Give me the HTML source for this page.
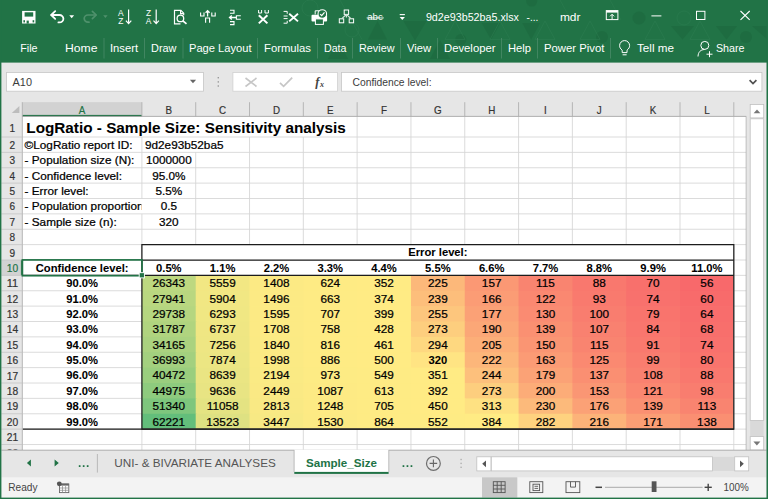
<!DOCTYPE html>
<html><head><meta charset="utf-8"><title>Excel</title>
<style>html,body{margin:0;padding:0;background:#e6e6e6;overflow:hidden}svg{display:block}</style></head>
<body><svg width="768" height="499" viewBox="0 0 768 499">
<rect x="0.00" y="0.00" width="768.00" height="499.00" fill="#e6e6e6" />
<rect x="0.00" y="0.00" width="768.00" height="62.60" fill="#217346" />
<g fill="#1c673d" opacity="0.5"><path d="M377.500 21l-9.500 18.500h19z"/><path d="M403.500 21h23l-11.500 19.500z"/><path d="M481.700 23h18.700l-9.400 16.600z"/><path d="M522.300 23h17.700l-8.800 16.600z"/><circle cx="460.800" cy="39.600" r="5.500"/><circle cx="531.700" cy="1" r="5.500"/><circle cx="639" cy="18" r="6.500"/><circle cx="602" cy="37" r="6"/><circle cx="746" cy="37" r="6"/><path d="M671 26h23l-11.500 13.500z"/><path d="M716 26h21l-10.500 13.500z"/><path d="M752 26h15v13z"/><path d="M338 40l10 19h-20z"/><path d="M440 40l10 19h-20z"/></g>
<g fill="none" stroke="#2d7e52" stroke-width="0.800" opacity="0.700"><path d="M340 0l22 39.500M455 21l10 18.500h-20zM500 21l10 18.500h-20zM545 21l10 18.500h-20zM590 21l10 18.500h-20zM560 0l11 20M610 0l11 20M655 21l10 18.500h-20zM700 21l10 18.500h-20z"/><circle cx="310" cy="8" r="8"/><circle cx="352" cy="30" r="7"/><circle cx="684" cy="18" r="7"/></g>
<g font-family="Liberation Sans, sans-serif">
<text x="425.90" y="20.70" font-size="11.4" fill="#ffffff" text-anchor="start" font-weight="normal" textLength="93.00" lengthAdjust="spacingAndGlyphs" >9d2e93b52ba5.xlsx</text>
<text x="526.60" y="20.70" font-size="11.4" fill="#ffffff" text-anchor="start" font-weight="normal" textLength="11.80" lengthAdjust="spacingAndGlyphs" >-...</text>
<text x="559.90" y="20.70" font-size="11.4" fill="#ffffff" text-anchor="start" font-weight="normal" textLength="20.60" lengthAdjust="spacingAndGlyphs" >mdr</text>
<!--TABS-->
<text x="20.30" y="52.00" font-size="11.6" fill="#ffffff" text-anchor="start" font-weight="normal" textLength="17.30" lengthAdjust="spacingAndGlyphs" >File</text>
<text x="65.00" y="52.00" font-size="11.6" fill="#ffffff" text-anchor="start" font-weight="normal" textLength="32.50" lengthAdjust="spacingAndGlyphs" >Home</text>
<text x="110.00" y="52.00" font-size="11.6" fill="#ffffff" text-anchor="start" font-weight="normal" textLength="28.00" lengthAdjust="spacingAndGlyphs" >Insert</text>
<text x="151.00" y="52.00" font-size="11.6" fill="#ffffff" text-anchor="start" font-weight="normal" textLength="25.50" lengthAdjust="spacingAndGlyphs" >Draw</text>
<text x="189.00" y="52.00" font-size="11.6" fill="#ffffff" text-anchor="start" font-weight="normal" textLength="62.50" lengthAdjust="spacingAndGlyphs" >Page Layout</text>
<text x="264.00" y="52.00" font-size="11.6" fill="#ffffff" text-anchor="start" font-weight="normal" textLength="47.00" lengthAdjust="spacingAndGlyphs" >Formulas</text>
<text x="324.00" y="52.00" font-size="11.6" fill="#ffffff" text-anchor="start" font-weight="normal" textLength="22.50" lengthAdjust="spacingAndGlyphs" >Data</text>
<text x="359.00" y="52.00" font-size="11.6" fill="#ffffff" text-anchor="start" font-weight="normal" textLength="35.50" lengthAdjust="spacingAndGlyphs" >Review</text>
<text x="407.00" y="52.00" font-size="11.6" fill="#ffffff" text-anchor="start" font-weight="normal" textLength="24.00" lengthAdjust="spacingAndGlyphs" >View</text>
<text x="444.00" y="52.00" font-size="11.6" fill="#ffffff" text-anchor="start" font-weight="normal" textLength="51.50" lengthAdjust="spacingAndGlyphs" >Developer</text>
<text x="508.00" y="52.00" font-size="11.6" fill="#ffffff" text-anchor="start" font-weight="normal" textLength="23.00" lengthAdjust="spacingAndGlyphs" >Help</text>
<text x="544.00" y="52.00" font-size="11.6" fill="#ffffff" text-anchor="start" font-weight="normal" textLength="60.50" lengthAdjust="spacingAndGlyphs" >Power Pivot</text>
<text x="637.00" y="52.00" font-size="11.6" fill="#ffffff" text-anchor="start" font-weight="normal" textLength="37.00" lengthAdjust="spacingAndGlyphs" >Tell me</text>
<text x="716.00" y="52.00" font-size="11.6" fill="#ffffff" text-anchor="start" font-weight="normal" textLength="28.50" lengthAdjust="spacingAndGlyphs" >Share</text>
<line x1="104.00" y1="38.00" x2="104.00" y2="58.50" stroke="#4a8c68" stroke-width="0.8" />
<line x1="144.50" y1="38.00" x2="144.50" y2="58.50" stroke="#4a8c68" stroke-width="0.8" />
<line x1="183.00" y1="38.00" x2="183.00" y2="58.50" stroke="#4a8c68" stroke-width="0.8" />
<line x1="257.50" y1="38.00" x2="257.50" y2="58.50" stroke="#4a8c68" stroke-width="0.8" />
<line x1="317.50" y1="38.00" x2="317.50" y2="58.50" stroke="#4a8c68" stroke-width="0.8" />
<line x1="352.50" y1="38.00" x2="352.50" y2="58.50" stroke="#4a8c68" stroke-width="0.8" />
<line x1="400.50" y1="38.00" x2="400.50" y2="58.50" stroke="#4a8c68" stroke-width="0.8" />
<line x1="437.50" y1="38.00" x2="437.50" y2="58.50" stroke="#4a8c68" stroke-width="0.8" />
<line x1="501.50" y1="38.00" x2="501.50" y2="58.50" stroke="#4a8c68" stroke-width="0.8" />
<line x1="537.50" y1="38.00" x2="537.50" y2="58.50" stroke="#4a8c68" stroke-width="0.8" />
<line x1="610.50" y1="38.00" x2="610.50" y2="58.50" stroke="#4a8c68" stroke-width="0.8" />
</g>
<!--QAT-->
<g id="qat">
<!-- save -->
<rect x="22.1" y="10.9" width="13.4" height="12.6" fill="#fff"/>
<rect x="24.6" y="12.3" width="8.6" height="4.3" fill="#217346"/>
<rect x="23.4" y="20.2" width="1.6" height="2.2" fill="#217346"/><rect x="32.6" y="20.2" width="1.6" height="2.2" fill="#217346"/>
<rect x="26.6" y="20.6" width="2.2" height="3" fill="#217346"/>
<!-- undo -->
<g fill="none" stroke="#fff" stroke-width="1.8" stroke-linecap="round" stroke-linejoin="round">
<path d="M51.400 15h8a4 3.700 0 0 1 0 7.400h-1"/><path d="M55.200 11.200l-4 3.800l4 3.800"/>
</g>
<path d="M69.300 15.200h4.800l-2.400 3z" fill="#fff"/>
<!-- redo -->
<g fill="none" stroke="#4f916c" stroke-width="1.700" stroke-linecap="round" stroke-linejoin="round">
<path d="M95.600 15h-7.600a3.800 3.600 0 0 0 0 7.200h1"/><path d="M92.400 11.400l3.800 3.600l-3.800 3.600"/>
</g>
<path d="M103.200 15.200h4.400l-2.200 2.800z" fill="#4f916c"/>
<!-- sort AZ / ZA -->
<g font-family="Liberation Sans, sans-serif" fill="#fff" font-size="8.400">
<text x="118" y="16">A</text><text x="118.300" y="23.500">Z</text><text x="146" y="16">Z</text><text x="145.700" y="23.500">A</text>
</g>
<g fill="none" stroke="#fff" stroke-width="1.200">
<path d="M128.600 9.600v13.600M125.900 20.600l2.700 3l2.700-3"/><path d="M156.200 9.600v13.600M153.500 20.600l2.700 3l2.700-3"/>
<!-- print preview -->
<path d="M180.500 23.800h-6v-13.400h6.400l2.800 2.800v2"/><path d="M180.600 10.600v3h3"/><circle cx="180.400" cy="18.400" r="3.300" stroke-width="1.300"/><path d="M182.900 20.900l3.600 3" stroke-width="1.700"/>
</g>
<!-- insert col -->
<g fill="none" stroke="#fff" stroke-width="1.100">
<path d="M200.600 12.400v3.600h3.400v-3.600M211.800 12.400v3.600h3.400v-3.600M205.600 22.800v-4.800h4v4.800"/><path d="M207.600 16.400v-5.600M205.600 12.800l2-2.200l2 2.200" stroke-width="1.300"/>
<!-- insert row -->
<path d="M230 10.200h4v3h-4M230 21.600h4v3h-4M240.800 15.800h-4.400v3.400h4.400"/><path d="M236 17.500h-6.400M231.800 15.400l-2.300 2.100l2.300 2.100" stroke-width="1.300"/>
<!-- delete col -->
<path d="M258.800 15.200l8.600 8.200M267.400 15.200l-8.600 8.200" stroke-width="2"/><path d="M258.600 10v3h3v-3M265 10v3h3.400v-3" stroke-width="1"/>
<!-- delete row -->
<path d="M289.200 13.800l8.800 7.600M298 13.800l-8.800 7.600" stroke-width="1.900"/><path d="M283.600 11.400h3.600v2.400M283.600 16h4M283.600 18.600h4M283.600 23.200h3.600v-2.400" stroke-width="1"/>
</g>
<!-- printer check -->
<path d="M315.200 14.400v-3.600h4" fill="none" stroke="#fff" stroke-width="1"/>
<rect x="311.500" y="14.800" width="15.600" height="6.700" rx="1" fill="#fff"/>
<rect x="315.400" y="18.900" width="8" height="5.500" fill="#217346" stroke="#fff" stroke-width="1"/>
<circle cx="322.300" cy="14" r="4.300" fill="#217346" stroke="#fff" stroke-width="1.100"/>
<path d="M320.200 14.100l1.500 1.600l2.800-3.300" stroke="#fff" stroke-width="1.200" fill="none"/>
<!-- org chart -->
<g fill="none" stroke="#fff" stroke-width="1">
<rect x="344.200" y="10" width="4.400" height="4.400"/><rect x="339.300" y="18.800" width="4.400" height="4"/><rect x="349.200" y="18.800" width="4.400" height="4"/>
<path d="M346.400 14.400l-4.600 4.400M346.400 14.400l4.600 4.400M346.400 14.400v3" stroke-width="1.200" stroke="#cfe3d8"/>
</g>
<!-- abc -->
<g font-family="Liberation Sans, sans-serif"><text x="367.200" y="20.200" font-size="9.300" fill="#fff" textLength="15.600" lengthAdjust="spacingAndGlyphs">abc</text></g>
<path d="M366.600 17.900h17.200" stroke="#fff" stroke-width="0.800"/>
<!-- customize -->
<path d="M399.700 14.600h5.200" stroke="#fff" stroke-width="1.100"/><path d="M399.700 17h5.200l-2.600 3.100z" fill="#fff"/>
<!-- window controls -->
<g fill="none" stroke="#fff" stroke-width="1">
<rect x="606.300" y="10.600" width="11.600" height="9"/><path d="M606.300 11.700h11.600" stroke-width="1.800"/><path d="M612.100 19v-4.600M610.100 16.300l2-2l2 2"/>
<path d="M651.400 15.900h10"/><rect x="696.500" y="11.300" width="8.400" height="8.200"/><path d="M740.500 11l9.200 8.800M749.700 11l-9.200 8.800" stroke-width="1.100"/>
<!-- bulb -->
<path d="M622.200 50.200c-2-1.600-2.600-3-2.600-4.600a5 5 0 0 1 10 0c0 1.600-.6 3-2.600 4.600v2.400h-4.800z M622.600 54.800h4"/>
<!-- share -->
<circle cx="704.800" cy="45.400" r="4"/><path d="M698 56.500c.2-4.500 2.600-6.800 6.500-7M706.500 54.200h6M709.500 51.200v6"/>
</g>
</g>

<rect x="6.40" y="72.40" width="197.00" height="18.80" fill="#fff" stroke="#c6c6c6" stroke-width="0.8"/>
<rect x="232.90" y="72.40" width="104.60" height="18.80" fill="#fff" stroke="#d0d0d0" stroke-width="0.8"/>
<rect x="341.50" y="72.40" width="420.40" height="18.80" fill="#fff" stroke="#c6c6c6" stroke-width="0.8"/>
<g font-family="Liberation Sans, sans-serif">
<text x="12.60" y="85.70" font-size="10.5" fill="#3c3c3c" text-anchor="start" font-weight="normal" textLength="19.40" lengthAdjust="spacingAndGlyphs" >A10</text>
<text x="352.50" y="85.70" font-size="10.3" fill="#3c3c3c" text-anchor="start" font-weight="normal" textLength="79.00" lengthAdjust="spacingAndGlyphs" >Confidence level:</text>
</g>
<path d="M189.900 79.700h6.200l-3.100 3.600z" fill="#666"/>
<rect x="217.60" y="77.00" width="1.40" height="1.40" fill="#9a9a9a" />
<rect x="217.60" y="81.20" width="1.40" height="1.40" fill="#9a9a9a" />
<rect x="217.60" y="85.30" width="1.40" height="1.40" fill="#9a9a9a" />
<path d="M245.500 78l11 8.500M256.500 78l-11 8.500" stroke="#c6c6c6" stroke-width="1.6" fill="none"/>
<path d="M280 82.800l3.600 3.600l8.600-8.800" stroke="#c6c6c6" stroke-width="1.7" fill="none"/>
<g font-family="Liberation Serif, serif"><text x="315.300" y="86" font-size="12.500" font-style="italic" font-weight="bold" fill="#444">f</text><text x="320" y="87" font-size="8" font-style="italic" fill="#444" font-weight="bold">x</text></g>
<path d="M749.600 80.200l3.400 3.400l3.400-3.400" stroke="#505050" stroke-width="1.700" fill="none"/>
<rect x="22.30" y="116.40" width="724.10" height="333.80" fill="#fff" />
<rect x="141.90" y="275.38" width="54.61" height="16.18" fill="#bdd880" />
<rect x="195.71" y="275.38" width="54.61" height="16.18" fill="#f2e783" />
<rect x="249.52" y="275.38" width="54.61" height="16.18" fill="#fcea84" />
<rect x="303.33" y="275.38" width="54.61" height="16.18" fill="#feeb84" />
<rect x="357.14" y="275.38" width="54.61" height="16.18" fill="#ffeb84" />
<rect x="410.95" y="275.38" width="54.61" height="16.18" fill="#fcb87a" />
<rect x="464.76" y="275.38" width="54.61" height="16.18" fill="#fb9874" />
<rect x="518.57" y="275.38" width="54.61" height="16.18" fill="#f98470" />
<rect x="572.38" y="275.38" width="54.61" height="16.18" fill="#f9786e" />
<rect x="626.19" y="275.38" width="54.61" height="16.18" fill="#f8706c" />
<rect x="680.00" y="275.38" width="53.81" height="16.18" fill="#f8696b" />
<rect x="141.90" y="290.76" width="54.61" height="16.18" fill="#b9d780" />
<rect x="195.71" y="290.76" width="54.61" height="16.18" fill="#f1e783" />
<rect x="249.52" y="290.76" width="54.61" height="16.18" fill="#fcea84" />
<rect x="303.33" y="290.76" width="54.61" height="16.18" fill="#feeb84" />
<rect x="357.14" y="290.76" width="54.61" height="16.18" fill="#ffeb84" />
<rect x="410.95" y="290.76" width="54.61" height="16.18" fill="#fdbe7b" />
<rect x="464.76" y="290.76" width="54.61" height="16.18" fill="#fb9c75" />
<rect x="518.57" y="290.76" width="54.61" height="16.18" fill="#fa8871" />
<rect x="572.38" y="290.76" width="54.61" height="16.18" fill="#f97a6e" />
<rect x="626.19" y="290.76" width="54.61" height="16.18" fill="#f8716d" />
<rect x="680.00" y="290.76" width="53.81" height="16.18" fill="#f86b6b" />
<rect x="141.90" y="306.14" width="54.61" height="16.18" fill="#b5d680" />
<rect x="195.71" y="306.14" width="54.61" height="16.18" fill="#f0e783" />
<rect x="249.52" y="306.14" width="54.61" height="16.18" fill="#fcea84" />
<rect x="303.33" y="306.14" width="54.61" height="16.18" fill="#feeb84" />
<rect x="357.14" y="306.14" width="54.61" height="16.18" fill="#ffeb84" />
<rect x="410.95" y="306.14" width="54.61" height="16.18" fill="#fdc67d" />
<rect x="464.76" y="306.14" width="54.61" height="16.18" fill="#fba176" />
<rect x="518.57" y="306.14" width="54.61" height="16.18" fill="#fa8b72" />
<rect x="572.38" y="306.14" width="54.61" height="16.18" fill="#f97d6f" />
<rect x="626.19" y="306.14" width="54.61" height="16.18" fill="#f9746d" />
<rect x="680.00" y="306.14" width="53.81" height="16.18" fill="#f86d6c" />
<rect x="141.90" y="321.51" width="54.61" height="16.18" fill="#b0d47f" />
<rect x="195.71" y="321.51" width="54.61" height="16.18" fill="#efe683" />
<rect x="249.52" y="321.51" width="54.61" height="16.18" fill="#fcea84" />
<rect x="303.33" y="321.51" width="54.61" height="16.18" fill="#feeb84" />
<rect x="357.14" y="321.51" width="54.61" height="16.18" fill="#ffeb84" />
<rect x="410.95" y="321.51" width="54.61" height="16.18" fill="#fdce7e" />
<rect x="464.76" y="321.51" width="54.61" height="16.18" fill="#fba777" />
<rect x="518.57" y="321.51" width="54.61" height="16.18" fill="#fa9072" />
<rect x="572.38" y="321.51" width="54.61" height="16.18" fill="#f98170" />
<rect x="626.19" y="321.51" width="54.61" height="16.18" fill="#f9766e" />
<rect x="680.00" y="321.51" width="53.81" height="16.18" fill="#f86f6c" />
<rect x="141.90" y="336.89" width="54.61" height="16.18" fill="#aad27f" />
<rect x="195.71" y="336.89" width="54.61" height="16.18" fill="#eee683" />
<rect x="249.52" y="336.89" width="54.61" height="16.18" fill="#fbea84" />
<rect x="303.33" y="336.89" width="54.61" height="16.18" fill="#feeb84" />
<rect x="357.14" y="336.89" width="54.61" height="16.18" fill="#ffeb84" />
<rect x="410.95" y="336.89" width="54.61" height="16.18" fill="#fed880" />
<rect x="464.76" y="336.89" width="54.61" height="16.18" fill="#fcae78" />
<rect x="518.57" y="336.89" width="54.61" height="16.18" fill="#fa9573" />
<rect x="572.38" y="336.89" width="54.61" height="16.18" fill="#f98470" />
<rect x="626.19" y="336.89" width="54.61" height="16.18" fill="#f9796e" />
<rect x="680.00" y="336.89" width="53.81" height="16.18" fill="#f8716d" />
<rect x="141.90" y="352.26" width="54.61" height="16.18" fill="#a3d07f" />
<rect x="195.71" y="352.26" width="54.61" height="16.18" fill="#ece683" />
<rect x="249.52" y="352.26" width="54.61" height="16.18" fill="#fbea84" />
<rect x="303.33" y="352.26" width="54.61" height="16.18" fill="#feeb84" />
<rect x="357.14" y="352.26" width="54.61" height="16.18" fill="#ffeb84" />
<rect x="410.95" y="352.26" width="54.61" height="16.18" fill="#ffe483" />
<rect x="464.76" y="352.26" width="54.61" height="16.18" fill="#fcb67a" />
<rect x="518.57" y="352.26" width="54.61" height="16.18" fill="#fb9b75" />
<rect x="572.38" y="352.26" width="54.61" height="16.18" fill="#fa8971" />
<rect x="626.19" y="352.26" width="54.61" height="16.18" fill="#f97d6f" />
<rect x="680.00" y="352.26" width="53.81" height="16.18" fill="#f9746d" />
<rect x="141.90" y="367.64" width="54.61" height="16.18" fill="#9ace7e" />
<rect x="195.71" y="367.64" width="54.61" height="16.18" fill="#eae583" />
<rect x="249.52" y="367.64" width="54.61" height="16.18" fill="#faea84" />
<rect x="303.33" y="367.64" width="54.61" height="16.18" fill="#fdeb84" />
<rect x="357.14" y="367.64" width="54.61" height="16.18" fill="#feeb84" />
<rect x="410.95" y="367.64" width="54.61" height="16.18" fill="#ffeb84" />
<rect x="464.76" y="367.64" width="54.61" height="16.18" fill="#fdc07c" />
<rect x="518.57" y="367.64" width="54.61" height="16.18" fill="#fba276" />
<rect x="572.38" y="367.64" width="54.61" height="16.18" fill="#fa8f72" />
<rect x="626.19" y="367.64" width="54.61" height="16.18" fill="#f98170" />
<rect x="680.00" y="367.64" width="53.81" height="16.18" fill="#f9786e" />
<rect x="141.90" y="383.02" width="54.61" height="16.18" fill="#8ecb7e" />
<rect x="195.71" y="383.02" width="54.61" height="16.18" fill="#e8e483" />
<rect x="249.52" y="383.02" width="54.61" height="16.18" fill="#fae984" />
<rect x="303.33" y="383.02" width="54.61" height="16.18" fill="#fdea84" />
<rect x="357.14" y="383.02" width="54.61" height="16.18" fill="#feeb84" />
<rect x="410.95" y="383.02" width="54.61" height="16.18" fill="#ffeb84" />
<rect x="464.76" y="383.02" width="54.61" height="16.18" fill="#fdce7e" />
<rect x="518.57" y="383.02" width="54.61" height="16.18" fill="#fcac78" />
<rect x="572.38" y="383.02" width="54.61" height="16.18" fill="#fa9674" />
<rect x="626.19" y="383.02" width="54.61" height="16.18" fill="#fa8771" />
<rect x="680.00" y="383.02" width="53.81" height="16.18" fill="#f97d6f" />
<rect x="141.90" y="398.39" width="54.61" height="16.18" fill="#7ec67d" />
<rect x="195.71" y="398.39" width="54.61" height="16.18" fill="#e4e382" />
<rect x="249.52" y="398.39" width="54.61" height="16.18" fill="#f9e984" />
<rect x="303.33" y="398.39" width="54.61" height="16.18" fill="#fdea84" />
<rect x="357.14" y="398.39" width="54.61" height="16.18" fill="#feeb84" />
<rect x="410.95" y="398.39" width="54.61" height="16.18" fill="#ffeb84" />
<rect x="464.76" y="398.39" width="54.61" height="16.18" fill="#fee182" />
<rect x="518.57" y="398.39" width="54.61" height="16.18" fill="#fcba7b" />
<rect x="572.38" y="398.39" width="54.61" height="16.18" fill="#fba176" />
<rect x="626.19" y="398.39" width="54.61" height="16.18" fill="#fa9072" />
<rect x="680.00" y="398.39" width="53.81" height="16.18" fill="#f98470" />
<rect x="141.90" y="413.77" width="54.61" height="15.38" fill="#63be7b" />
<rect x="195.71" y="413.77" width="54.61" height="15.38" fill="#dee182" />
<rect x="249.52" y="413.77" width="54.61" height="15.38" fill="#f7e984" />
<rect x="303.33" y="413.77" width="54.61" height="15.38" fill="#fcea84" />
<rect x="357.14" y="413.77" width="54.61" height="15.38" fill="#feeb84" />
<rect x="410.95" y="413.77" width="54.61" height="15.38" fill="#feeb84" />
<rect x="464.76" y="413.77" width="54.61" height="15.38" fill="#ffeb84" />
<rect x="518.57" y="413.77" width="54.61" height="15.38" fill="#fed27f" />
<rect x="572.38" y="413.77" width="54.61" height="15.38" fill="#fcb379" />
<rect x="626.19" y="413.77" width="54.61" height="15.38" fill="#fb9e75" />
<rect x="680.00" y="413.77" width="53.81" height="15.38" fill="#fa8f72" />
<line x1="22.30" y1="137.00" x2="746.40" y2="137.00" stroke="#d4d4d4" stroke-width="0.85" />
<line x1="22.30" y1="152.38" x2="746.40" y2="152.38" stroke="#d4d4d4" stroke-width="0.85" />
<line x1="22.30" y1="167.75" x2="746.40" y2="167.75" stroke="#d4d4d4" stroke-width="0.85" />
<line x1="22.30" y1="183.13" x2="746.40" y2="183.13" stroke="#d4d4d4" stroke-width="0.85" />
<line x1="22.30" y1="198.50" x2="746.40" y2="198.50" stroke="#d4d4d4" stroke-width="0.85" />
<line x1="22.30" y1="213.88" x2="746.40" y2="213.88" stroke="#d4d4d4" stroke-width="0.85" />
<line x1="22.30" y1="229.26" x2="746.40" y2="229.26" stroke="#d4d4d4" stroke-width="0.85" />
<line x1="22.30" y1="244.63" x2="746.40" y2="244.63" stroke="#d4d4d4" stroke-width="0.85" />
<line x1="22.30" y1="260.01" x2="746.40" y2="260.01" stroke="#d4d4d4" stroke-width="0.85" />
<line x1="22.30" y1="275.38" x2="746.40" y2="275.38" stroke="#d4d4d4" stroke-width="0.85" />
<line x1="22.30" y1="290.76" x2="141.90" y2="290.76" stroke="#d4d4d4" stroke-width="0.85" />
<line x1="733.81" y1="290.76" x2="746.40" y2="290.76" stroke="#d4d4d4" stroke-width="0.85" />
<line x1="22.30" y1="306.14" x2="141.90" y2="306.14" stroke="#d4d4d4" stroke-width="0.85" />
<line x1="733.81" y1="306.14" x2="746.40" y2="306.14" stroke="#d4d4d4" stroke-width="0.85" />
<line x1="22.30" y1="321.51" x2="141.90" y2="321.51" stroke="#d4d4d4" stroke-width="0.85" />
<line x1="733.81" y1="321.51" x2="746.40" y2="321.51" stroke="#d4d4d4" stroke-width="0.85" />
<line x1="22.30" y1="336.89" x2="141.90" y2="336.89" stroke="#d4d4d4" stroke-width="0.85" />
<line x1="733.81" y1="336.89" x2="746.40" y2="336.89" stroke="#d4d4d4" stroke-width="0.85" />
<line x1="22.30" y1="352.26" x2="141.90" y2="352.26" stroke="#d4d4d4" stroke-width="0.85" />
<line x1="733.81" y1="352.26" x2="746.40" y2="352.26" stroke="#d4d4d4" stroke-width="0.85" />
<line x1="22.30" y1="367.64" x2="141.90" y2="367.64" stroke="#d4d4d4" stroke-width="0.85" />
<line x1="733.81" y1="367.64" x2="746.40" y2="367.64" stroke="#d4d4d4" stroke-width="0.85" />
<line x1="22.30" y1="383.02" x2="141.90" y2="383.02" stroke="#d4d4d4" stroke-width="0.85" />
<line x1="733.81" y1="383.02" x2="746.40" y2="383.02" stroke="#d4d4d4" stroke-width="0.85" />
<line x1="22.30" y1="398.39" x2="141.90" y2="398.39" stroke="#d4d4d4" stroke-width="0.85" />
<line x1="733.81" y1="398.39" x2="746.40" y2="398.39" stroke="#d4d4d4" stroke-width="0.85" />
<line x1="22.30" y1="413.77" x2="141.90" y2="413.77" stroke="#d4d4d4" stroke-width="0.85" />
<line x1="733.81" y1="413.77" x2="746.40" y2="413.77" stroke="#d4d4d4" stroke-width="0.85" />
<line x1="22.30" y1="429.14" x2="746.40" y2="429.14" stroke="#d4d4d4" stroke-width="0.85" />
<line x1="22.30" y1="444.52" x2="746.40" y2="444.52" stroke="#d4d4d4" stroke-width="0.85" />
<line x1="141.90" y1="137.00" x2="141.90" y2="198.50" stroke="#d4d4d4" stroke-width="0.85" />
<line x1="141.90" y1="213.88" x2="141.90" y2="260.01" stroke="#d4d4d4" stroke-width="0.85" />
<line x1="141.90" y1="429.14" x2="141.90" y2="450.20" stroke="#d4d4d4" stroke-width="0.85" />
<line x1="195.71" y1="152.38" x2="195.71" y2="244.63" stroke="#d4d4d4" stroke-width="0.85" />
<line x1="195.71" y1="429.14" x2="195.71" y2="450.20" stroke="#d4d4d4" stroke-width="0.85" />
<line x1="249.52" y1="137.00" x2="249.52" y2="244.63" stroke="#d4d4d4" stroke-width="0.85" />
<line x1="249.52" y1="429.14" x2="249.52" y2="450.20" stroke="#d4d4d4" stroke-width="0.85" />
<line x1="303.33" y1="137.00" x2="303.33" y2="244.63" stroke="#d4d4d4" stroke-width="0.85" />
<line x1="303.33" y1="429.14" x2="303.33" y2="450.20" stroke="#d4d4d4" stroke-width="0.85" />
<line x1="357.14" y1="116.40" x2="357.14" y2="244.63" stroke="#d4d4d4" stroke-width="0.85" />
<line x1="357.14" y1="429.14" x2="357.14" y2="450.20" stroke="#d4d4d4" stroke-width="0.85" />
<line x1="410.95" y1="116.40" x2="410.95" y2="244.63" stroke="#d4d4d4" stroke-width="0.85" />
<line x1="410.95" y1="429.14" x2="410.95" y2="450.20" stroke="#d4d4d4" stroke-width="0.85" />
<line x1="464.76" y1="116.40" x2="464.76" y2="244.63" stroke="#d4d4d4" stroke-width="0.85" />
<line x1="464.76" y1="429.14" x2="464.76" y2="450.20" stroke="#d4d4d4" stroke-width="0.85" />
<line x1="518.57" y1="116.40" x2="518.57" y2="244.63" stroke="#d4d4d4" stroke-width="0.85" />
<line x1="518.57" y1="429.14" x2="518.57" y2="450.20" stroke="#d4d4d4" stroke-width="0.85" />
<line x1="572.38" y1="116.40" x2="572.38" y2="244.63" stroke="#d4d4d4" stroke-width="0.85" />
<line x1="572.38" y1="429.14" x2="572.38" y2="450.20" stroke="#d4d4d4" stroke-width="0.85" />
<line x1="626.19" y1="116.40" x2="626.19" y2="244.63" stroke="#d4d4d4" stroke-width="0.85" />
<line x1="626.19" y1="429.14" x2="626.19" y2="450.20" stroke="#d4d4d4" stroke-width="0.85" />
<line x1="680.00" y1="116.40" x2="680.00" y2="244.63" stroke="#d4d4d4" stroke-width="0.85" />
<line x1="680.00" y1="429.14" x2="680.00" y2="450.20" stroke="#d4d4d4" stroke-width="0.85" />
<line x1="733.81" y1="116.40" x2="733.81" y2="450.20" stroke="#d4d4d4" stroke-width="0.85" />
<rect x="141.90" y="244.63" width="591.91" height="15.38" fill="#fff" />
<rect x="141.90" y="244.63" width="591.91" height="184.51" fill="none" stroke="#1c1c1c" stroke-width="1.25"/>
<line x1="141.90" y1="260.01" x2="733.81" y2="260.01" stroke="#1c1c1c" stroke-width="1.25" />
<line x1="22.30" y1="275.38" x2="733.81" y2="275.38" stroke="#1c1c1c" stroke-width="1.25" />
<line x1="22.30" y1="429.14" x2="733.81" y2="429.14" stroke="#1c1c1c" stroke-width="1.25" />
<g font-family="Liberation Sans, sans-serif" stroke="#000" stroke-width="0.22">
<text x="26.30" y="132.60" font-size="14.7" fill="#000" text-anchor="start" font-weight="bold" textLength="319.50" lengthAdjust="spacingAndGlyphs" stroke-width="0.05">LogRatio - Sample Size: Sensitivity analysis</text>
<clipPath id="ca"><rect x="22.3" y="137.0" width="119.10" height="200"/></clipPath>
<g clip-path="url(#ca)">
<text transform="translate(24.60 148.78) scale(1.09 1)" font-size="10.8" fill="#000" text-anchor="start" font-weight="normal" >©LogRatio report ID:</text>
<text transform="translate(24.60 164.15) scale(1.09 1)" font-size="10.8" fill="#000" text-anchor="start" font-weight="normal" >- Population size (N):</text>
<text transform="translate(24.60 179.53) scale(1.09 1)" font-size="10.8" fill="#000" text-anchor="start" font-weight="normal" >- Confidence level:</text>
<text transform="translate(24.60 194.90) scale(1.09 1)" font-size="10.8" fill="#000" text-anchor="start" font-weight="normal" >- Error level:</text>
<text transform="translate(24.60 210.28) scale(1.09 1)" font-size="10.8" fill="#000" text-anchor="start" font-weight="normal" >- Population proportion</text>
<text transform="translate(24.60 225.66) scale(1.09 1)" font-size="10.8" fill="#000" text-anchor="start" font-weight="normal" >- Sample size (n):</text>
</g>
<text transform="translate(145.00 148.78) scale(1.09 1)" font-size="10.8" fill="#000" text-anchor="start" font-weight="normal" >9d2e93b52ba5</text>
<text transform="translate(168.81 164.15) scale(1.09 1)" font-size="10.8" fill="#000" text-anchor="middle" font-weight="normal" >1000000</text>
<text transform="translate(168.81 179.53) scale(1.09 1)" font-size="10.8" fill="#000" text-anchor="middle" font-weight="normal" >95.0%</text>
<text transform="translate(168.81 194.90) scale(1.09 1)" font-size="10.8" fill="#000" text-anchor="middle" font-weight="normal" >5.5%</text>
<text transform="translate(168.81 210.28) scale(1.09 1)" font-size="10.8" fill="#000" text-anchor="middle" font-weight="normal" >0.5</text>
<text transform="translate(168.81 225.66) scale(1.09 1)" font-size="10.8" fill="#000" text-anchor="middle" font-weight="normal" >320</text>
<text transform="translate(437.86 256.41) scale(1.04 1)" font-size="10.8" fill="#000" text-anchor="middle" font-weight="bold"  stroke-width="0.05">Error level:</text>
<text transform="translate(82.10 271.78) scale(1.04 1)" font-size="10.8" fill="#000" text-anchor="middle" font-weight="bold"  stroke-width="0.05">Confidence level:</text>
<text transform="translate(168.81 271.78) scale(1.04 1)" font-size="10.8" fill="#000" text-anchor="middle" font-weight="bold"  stroke-width="0.05">0.5%</text>
<text transform="translate(222.62 271.78) scale(1.04 1)" font-size="10.8" fill="#000" text-anchor="middle" font-weight="bold"  stroke-width="0.05">1.1%</text>
<text transform="translate(276.43 271.78) scale(1.04 1)" font-size="10.8" fill="#000" text-anchor="middle" font-weight="bold"  stroke-width="0.05">2.2%</text>
<text transform="translate(330.24 271.78) scale(1.04 1)" font-size="10.8" fill="#000" text-anchor="middle" font-weight="bold"  stroke-width="0.05">3.3%</text>
<text transform="translate(384.04 271.78) scale(1.04 1)" font-size="10.8" fill="#000" text-anchor="middle" font-weight="bold"  stroke-width="0.05">4.4%</text>
<text transform="translate(437.86 271.78) scale(1.04 1)" font-size="10.8" fill="#000" text-anchor="middle" font-weight="bold"  stroke-width="0.05">5.5%</text>
<text transform="translate(491.66 271.78) scale(1.04 1)" font-size="10.8" fill="#000" text-anchor="middle" font-weight="bold"  stroke-width="0.05">6.6%</text>
<text transform="translate(545.48 271.78) scale(1.04 1)" font-size="10.8" fill="#000" text-anchor="middle" font-weight="bold"  stroke-width="0.05">7.7%</text>
<text transform="translate(599.28 271.78) scale(1.04 1)" font-size="10.8" fill="#000" text-anchor="middle" font-weight="bold"  stroke-width="0.05">8.8%</text>
<text transform="translate(653.10 271.78) scale(1.04 1)" font-size="10.8" fill="#000" text-anchor="middle" font-weight="bold"  stroke-width="0.05">9.9%</text>
<text transform="translate(706.90 271.78) scale(1.04 1)" font-size="10.8" fill="#000" text-anchor="middle" font-weight="bold"  stroke-width="0.05">11.0%</text>
<text transform="translate(82.10 287.16) scale(1.04 1)" font-size="10.8" fill="#000" text-anchor="middle" font-weight="bold"  stroke-width="0.05">90.0%</text>
<text transform="translate(168.81 287.16) scale(1.09 1)" font-size="10.8" fill="#000" text-anchor="middle" font-weight="normal" >26343</text>
<text transform="translate(222.62 287.16) scale(1.09 1)" font-size="10.8" fill="#000" text-anchor="middle" font-weight="normal" >5559</text>
<text transform="translate(276.43 287.16) scale(1.09 1)" font-size="10.8" fill="#000" text-anchor="middle" font-weight="normal" >1408</text>
<text transform="translate(330.24 287.16) scale(1.09 1)" font-size="10.8" fill="#000" text-anchor="middle" font-weight="normal" >624</text>
<text transform="translate(384.04 287.16) scale(1.09 1)" font-size="10.8" fill="#000" text-anchor="middle" font-weight="normal" >352</text>
<text transform="translate(437.86 287.16) scale(1.09 1)" font-size="10.8" fill="#000" text-anchor="middle" font-weight="normal" >225</text>
<text transform="translate(491.66 287.16) scale(1.09 1)" font-size="10.8" fill="#000" text-anchor="middle" font-weight="normal" >157</text>
<text transform="translate(545.48 287.16) scale(1.09 1)" font-size="10.8" fill="#000" text-anchor="middle" font-weight="normal" >115</text>
<text transform="translate(599.28 287.16) scale(1.09 1)" font-size="10.8" fill="#000" text-anchor="middle" font-weight="normal" >88</text>
<text transform="translate(653.10 287.16) scale(1.09 1)" font-size="10.8" fill="#000" text-anchor="middle" font-weight="normal" >70</text>
<text transform="translate(706.90 287.16) scale(1.09 1)" font-size="10.8" fill="#000" text-anchor="middle" font-weight="normal" >56</text>
<text transform="translate(82.10 302.54) scale(1.04 1)" font-size="10.8" fill="#000" text-anchor="middle" font-weight="bold"  stroke-width="0.05">91.0%</text>
<text transform="translate(168.81 302.54) scale(1.09 1)" font-size="10.8" fill="#000" text-anchor="middle" font-weight="normal" >27941</text>
<text transform="translate(222.62 302.54) scale(1.09 1)" font-size="10.8" fill="#000" text-anchor="middle" font-weight="normal" >5904</text>
<text transform="translate(276.43 302.54) scale(1.09 1)" font-size="10.8" fill="#000" text-anchor="middle" font-weight="normal" >1496</text>
<text transform="translate(330.24 302.54) scale(1.09 1)" font-size="10.8" fill="#000" text-anchor="middle" font-weight="normal" >663</text>
<text transform="translate(384.04 302.54) scale(1.09 1)" font-size="10.8" fill="#000" text-anchor="middle" font-weight="normal" >374</text>
<text transform="translate(437.86 302.54) scale(1.09 1)" font-size="10.8" fill="#000" text-anchor="middle" font-weight="normal" >239</text>
<text transform="translate(491.66 302.54) scale(1.09 1)" font-size="10.8" fill="#000" text-anchor="middle" font-weight="normal" >166</text>
<text transform="translate(545.48 302.54) scale(1.09 1)" font-size="10.8" fill="#000" text-anchor="middle" font-weight="normal" >122</text>
<text transform="translate(599.28 302.54) scale(1.09 1)" font-size="10.8" fill="#000" text-anchor="middle" font-weight="normal" >93</text>
<text transform="translate(653.10 302.54) scale(1.09 1)" font-size="10.8" fill="#000" text-anchor="middle" font-weight="normal" >74</text>
<text transform="translate(706.90 302.54) scale(1.09 1)" font-size="10.8" fill="#000" text-anchor="middle" font-weight="normal" >60</text>
<text transform="translate(82.10 317.91) scale(1.04 1)" font-size="10.8" fill="#000" text-anchor="middle" font-weight="bold"  stroke-width="0.05">92.0%</text>
<text transform="translate(168.81 317.91) scale(1.09 1)" font-size="10.8" fill="#000" text-anchor="middle" font-weight="normal" >29738</text>
<text transform="translate(222.62 317.91) scale(1.09 1)" font-size="10.8" fill="#000" text-anchor="middle" font-weight="normal" >6293</text>
<text transform="translate(276.43 317.91) scale(1.09 1)" font-size="10.8" fill="#000" text-anchor="middle" font-weight="normal" >1595</text>
<text transform="translate(330.24 317.91) scale(1.09 1)" font-size="10.8" fill="#000" text-anchor="middle" font-weight="normal" >707</text>
<text transform="translate(384.04 317.91) scale(1.09 1)" font-size="10.8" fill="#000" text-anchor="middle" font-weight="normal" >399</text>
<text transform="translate(437.86 317.91) scale(1.09 1)" font-size="10.8" fill="#000" text-anchor="middle" font-weight="normal" >255</text>
<text transform="translate(491.66 317.91) scale(1.09 1)" font-size="10.8" fill="#000" text-anchor="middle" font-weight="normal" >177</text>
<text transform="translate(545.48 317.91) scale(1.09 1)" font-size="10.8" fill="#000" text-anchor="middle" font-weight="normal" >130</text>
<text transform="translate(599.28 317.91) scale(1.09 1)" font-size="10.8" fill="#000" text-anchor="middle" font-weight="normal" >100</text>
<text transform="translate(653.10 317.91) scale(1.09 1)" font-size="10.8" fill="#000" text-anchor="middle" font-weight="normal" >79</text>
<text transform="translate(706.90 317.91) scale(1.09 1)" font-size="10.8" fill="#000" text-anchor="middle" font-weight="normal" >64</text>
<text transform="translate(82.10 333.29) scale(1.04 1)" font-size="10.8" fill="#000" text-anchor="middle" font-weight="bold"  stroke-width="0.05">93.0%</text>
<text transform="translate(168.81 333.29) scale(1.09 1)" font-size="10.8" fill="#000" text-anchor="middle" font-weight="normal" >31787</text>
<text transform="translate(222.62 333.29) scale(1.09 1)" font-size="10.8" fill="#000" text-anchor="middle" font-weight="normal" >6737</text>
<text transform="translate(276.43 333.29) scale(1.09 1)" font-size="10.8" fill="#000" text-anchor="middle" font-weight="normal" >1708</text>
<text transform="translate(330.24 333.29) scale(1.09 1)" font-size="10.8" fill="#000" text-anchor="middle" font-weight="normal" >758</text>
<text transform="translate(384.04 333.29) scale(1.09 1)" font-size="10.8" fill="#000" text-anchor="middle" font-weight="normal" >428</text>
<text transform="translate(437.86 333.29) scale(1.09 1)" font-size="10.8" fill="#000" text-anchor="middle" font-weight="normal" >273</text>
<text transform="translate(491.66 333.29) scale(1.09 1)" font-size="10.8" fill="#000" text-anchor="middle" font-weight="normal" >190</text>
<text transform="translate(545.48 333.29) scale(1.09 1)" font-size="10.8" fill="#000" text-anchor="middle" font-weight="normal" >139</text>
<text transform="translate(599.28 333.29) scale(1.09 1)" font-size="10.8" fill="#000" text-anchor="middle" font-weight="normal" >107</text>
<text transform="translate(653.10 333.29) scale(1.09 1)" font-size="10.8" fill="#000" text-anchor="middle" font-weight="normal" >84</text>
<text transform="translate(706.90 333.29) scale(1.09 1)" font-size="10.8" fill="#000" text-anchor="middle" font-weight="normal" >68</text>
<text transform="translate(82.10 348.66) scale(1.04 1)" font-size="10.8" fill="#000" text-anchor="middle" font-weight="bold"  stroke-width="0.05">94.0%</text>
<text transform="translate(168.81 348.66) scale(1.09 1)" font-size="10.8" fill="#000" text-anchor="middle" font-weight="normal" >34165</text>
<text transform="translate(222.62 348.66) scale(1.09 1)" font-size="10.8" fill="#000" text-anchor="middle" font-weight="normal" >7256</text>
<text transform="translate(276.43 348.66) scale(1.09 1)" font-size="10.8" fill="#000" text-anchor="middle" font-weight="normal" >1840</text>
<text transform="translate(330.24 348.66) scale(1.09 1)" font-size="10.8" fill="#000" text-anchor="middle" font-weight="normal" >816</text>
<text transform="translate(384.04 348.66) scale(1.09 1)" font-size="10.8" fill="#000" text-anchor="middle" font-weight="normal" >461</text>
<text transform="translate(437.86 348.66) scale(1.09 1)" font-size="10.8" fill="#000" text-anchor="middle" font-weight="normal" >294</text>
<text transform="translate(491.66 348.66) scale(1.09 1)" font-size="10.8" fill="#000" text-anchor="middle" font-weight="normal" >205</text>
<text transform="translate(545.48 348.66) scale(1.09 1)" font-size="10.8" fill="#000" text-anchor="middle" font-weight="normal" >150</text>
<text transform="translate(599.28 348.66) scale(1.09 1)" font-size="10.8" fill="#000" text-anchor="middle" font-weight="normal" >115</text>
<text transform="translate(653.10 348.66) scale(1.09 1)" font-size="10.8" fill="#000" text-anchor="middle" font-weight="normal" >91</text>
<text transform="translate(706.90 348.66) scale(1.09 1)" font-size="10.8" fill="#000" text-anchor="middle" font-weight="normal" >74</text>
<text transform="translate(82.10 364.04) scale(1.04 1)" font-size="10.8" fill="#000" text-anchor="middle" font-weight="bold"  stroke-width="0.05">95.0%</text>
<text transform="translate(168.81 364.04) scale(1.09 1)" font-size="10.8" fill="#000" text-anchor="middle" font-weight="normal" >36993</text>
<text transform="translate(222.62 364.04) scale(1.09 1)" font-size="10.8" fill="#000" text-anchor="middle" font-weight="normal" >7874</text>
<text transform="translate(276.43 364.04) scale(1.09 1)" font-size="10.8" fill="#000" text-anchor="middle" font-weight="normal" >1998</text>
<text transform="translate(330.24 364.04) scale(1.09 1)" font-size="10.8" fill="#000" text-anchor="middle" font-weight="normal" >886</text>
<text transform="translate(384.04 364.04) scale(1.09 1)" font-size="10.8" fill="#000" text-anchor="middle" font-weight="normal" >500</text>
<text transform="translate(437.86 364.04) scale(1.04 1)" font-size="10.8" fill="#000" text-anchor="middle" font-weight="bold"  stroke-width="0.05">320</text>
<text transform="translate(491.66 364.04) scale(1.09 1)" font-size="10.8" fill="#000" text-anchor="middle" font-weight="normal" >222</text>
<text transform="translate(545.48 364.04) scale(1.09 1)" font-size="10.8" fill="#000" text-anchor="middle" font-weight="normal" >163</text>
<text transform="translate(599.28 364.04) scale(1.09 1)" font-size="10.8" fill="#000" text-anchor="middle" font-weight="normal" >125</text>
<text transform="translate(653.10 364.04) scale(1.09 1)" font-size="10.8" fill="#000" text-anchor="middle" font-weight="normal" >99</text>
<text transform="translate(706.90 364.04) scale(1.09 1)" font-size="10.8" fill="#000" text-anchor="middle" font-weight="normal" >80</text>
<text transform="translate(82.10 379.42) scale(1.04 1)" font-size="10.8" fill="#000" text-anchor="middle" font-weight="bold"  stroke-width="0.05">96.0%</text>
<text transform="translate(168.81 379.42) scale(1.09 1)" font-size="10.8" fill="#000" text-anchor="middle" font-weight="normal" >40472</text>
<text transform="translate(222.62 379.42) scale(1.09 1)" font-size="10.8" fill="#000" text-anchor="middle" font-weight="normal" >8639</text>
<text transform="translate(276.43 379.42) scale(1.09 1)" font-size="10.8" fill="#000" text-anchor="middle" font-weight="normal" >2194</text>
<text transform="translate(330.24 379.42) scale(1.09 1)" font-size="10.8" fill="#000" text-anchor="middle" font-weight="normal" >973</text>
<text transform="translate(384.04 379.42) scale(1.09 1)" font-size="10.8" fill="#000" text-anchor="middle" font-weight="normal" >549</text>
<text transform="translate(437.86 379.42) scale(1.09 1)" font-size="10.8" fill="#000" text-anchor="middle" font-weight="normal" >351</text>
<text transform="translate(491.66 379.42) scale(1.09 1)" font-size="10.8" fill="#000" text-anchor="middle" font-weight="normal" >244</text>
<text transform="translate(545.48 379.42) scale(1.09 1)" font-size="10.8" fill="#000" text-anchor="middle" font-weight="normal" >179</text>
<text transform="translate(599.28 379.42) scale(1.09 1)" font-size="10.8" fill="#000" text-anchor="middle" font-weight="normal" >137</text>
<text transform="translate(653.10 379.42) scale(1.09 1)" font-size="10.8" fill="#000" text-anchor="middle" font-weight="normal" >108</text>
<text transform="translate(706.90 379.42) scale(1.09 1)" font-size="10.8" fill="#000" text-anchor="middle" font-weight="normal" >88</text>
<text transform="translate(82.10 394.79) scale(1.04 1)" font-size="10.8" fill="#000" text-anchor="middle" font-weight="bold"  stroke-width="0.05">97.0%</text>
<text transform="translate(168.81 394.79) scale(1.09 1)" font-size="10.8" fill="#000" text-anchor="middle" font-weight="normal" >44975</text>
<text transform="translate(222.62 394.79) scale(1.09 1)" font-size="10.8" fill="#000" text-anchor="middle" font-weight="normal" >9636</text>
<text transform="translate(276.43 394.79) scale(1.09 1)" font-size="10.8" fill="#000" text-anchor="middle" font-weight="normal" >2449</text>
<text transform="translate(330.24 394.79) scale(1.09 1)" font-size="10.8" fill="#000" text-anchor="middle" font-weight="normal" >1087</text>
<text transform="translate(384.04 394.79) scale(1.09 1)" font-size="10.8" fill="#000" text-anchor="middle" font-weight="normal" >613</text>
<text transform="translate(437.86 394.79) scale(1.09 1)" font-size="10.8" fill="#000" text-anchor="middle" font-weight="normal" >392</text>
<text transform="translate(491.66 394.79) scale(1.09 1)" font-size="10.8" fill="#000" text-anchor="middle" font-weight="normal" >273</text>
<text transform="translate(545.48 394.79) scale(1.09 1)" font-size="10.8" fill="#000" text-anchor="middle" font-weight="normal" >200</text>
<text transform="translate(599.28 394.79) scale(1.09 1)" font-size="10.8" fill="#000" text-anchor="middle" font-weight="normal" >153</text>
<text transform="translate(653.10 394.79) scale(1.09 1)" font-size="10.8" fill="#000" text-anchor="middle" font-weight="normal" >121</text>
<text transform="translate(706.90 394.79) scale(1.09 1)" font-size="10.8" fill="#000" text-anchor="middle" font-weight="normal" >98</text>
<text transform="translate(82.10 410.17) scale(1.04 1)" font-size="10.8" fill="#000" text-anchor="middle" font-weight="bold"  stroke-width="0.05">98.0%</text>
<text transform="translate(168.81 410.17) scale(1.09 1)" font-size="10.8" fill="#000" text-anchor="middle" font-weight="normal" >51340</text>
<text transform="translate(222.62 410.17) scale(1.09 1)" font-size="10.8" fill="#000" text-anchor="middle" font-weight="normal" >11058</text>
<text transform="translate(276.43 410.17) scale(1.09 1)" font-size="10.8" fill="#000" text-anchor="middle" font-weight="normal" >2813</text>
<text transform="translate(330.24 410.17) scale(1.09 1)" font-size="10.8" fill="#000" text-anchor="middle" font-weight="normal" >1248</text>
<text transform="translate(384.04 410.17) scale(1.09 1)" font-size="10.8" fill="#000" text-anchor="middle" font-weight="normal" >705</text>
<text transform="translate(437.86 410.17) scale(1.09 1)" font-size="10.8" fill="#000" text-anchor="middle" font-weight="normal" >450</text>
<text transform="translate(491.66 410.17) scale(1.09 1)" font-size="10.8" fill="#000" text-anchor="middle" font-weight="normal" >313</text>
<text transform="translate(545.48 410.17) scale(1.09 1)" font-size="10.8" fill="#000" text-anchor="middle" font-weight="normal" >230</text>
<text transform="translate(599.28 410.17) scale(1.09 1)" font-size="10.8" fill="#000" text-anchor="middle" font-weight="normal" >176</text>
<text transform="translate(653.10 410.17) scale(1.09 1)" font-size="10.8" fill="#000" text-anchor="middle" font-weight="normal" >139</text>
<text transform="translate(706.90 410.17) scale(1.09 1)" font-size="10.8" fill="#000" text-anchor="middle" font-weight="normal" >113</text>
<text transform="translate(82.10 425.54) scale(1.04 1)" font-size="10.8" fill="#000" text-anchor="middle" font-weight="bold"  stroke-width="0.05">99.0%</text>
<text transform="translate(168.81 425.54) scale(1.09 1)" font-size="10.8" fill="#000" text-anchor="middle" font-weight="normal" >62221</text>
<text transform="translate(222.62 425.54) scale(1.09 1)" font-size="10.8" fill="#000" text-anchor="middle" font-weight="normal" >13523</text>
<text transform="translate(276.43 425.54) scale(1.09 1)" font-size="10.8" fill="#000" text-anchor="middle" font-weight="normal" >3447</text>
<text transform="translate(330.24 425.54) scale(1.09 1)" font-size="10.8" fill="#000" text-anchor="middle" font-weight="normal" >1530</text>
<text transform="translate(384.04 425.54) scale(1.09 1)" font-size="10.8" fill="#000" text-anchor="middle" font-weight="normal" >864</text>
<text transform="translate(437.86 425.54) scale(1.09 1)" font-size="10.8" fill="#000" text-anchor="middle" font-weight="normal" >552</text>
<text transform="translate(491.66 425.54) scale(1.09 1)" font-size="10.8" fill="#000" text-anchor="middle" font-weight="normal" >384</text>
<text transform="translate(545.48 425.54) scale(1.09 1)" font-size="10.8" fill="#000" text-anchor="middle" font-weight="normal" >282</text>
<text transform="translate(599.28 425.54) scale(1.09 1)" font-size="10.8" fill="#000" text-anchor="middle" font-weight="normal" >216</text>
<text transform="translate(653.10 425.54) scale(1.09 1)" font-size="10.8" fill="#000" text-anchor="middle" font-weight="normal" >171</text>
<text transform="translate(706.90 425.54) scale(1.09 1)" font-size="10.8" fill="#000" text-anchor="middle" font-weight="normal" >138</text>
</g>
<rect x="1.40" y="101.70" width="745.00" height="14.70" fill="#e6e6e6" />
<rect x="1.40" y="116.40" width="20.90" height="333.80" fill="#e6e6e6" />
<rect x="22.30" y="102.20" width="119.60" height="14.20" fill="#d2d2d2" />
<rect x="22.30" y="114.90" width="119.60" height="1.60" fill="#217346" />
<rect x="1.40" y="260.01" width="20.90" height="15.38" fill="#d2d2d2" />
<rect x="20.90" y="260.01" width="1.50" height="15.38" fill="#217346" />
<line x1="141.90" y1="102.20" x2="141.90" y2="116.40" stroke="#b0b0b0" stroke-width="0.9" />
<line x1="195.71" y1="102.20" x2="195.71" y2="116.40" stroke="#b0b0b0" stroke-width="0.9" />
<line x1="249.52" y1="102.20" x2="249.52" y2="116.40" stroke="#b0b0b0" stroke-width="0.9" />
<line x1="303.33" y1="102.20" x2="303.33" y2="116.40" stroke="#b0b0b0" stroke-width="0.9" />
<line x1="357.14" y1="102.20" x2="357.14" y2="116.40" stroke="#b0b0b0" stroke-width="0.9" />
<line x1="410.95" y1="102.20" x2="410.95" y2="116.40" stroke="#b0b0b0" stroke-width="0.9" />
<line x1="464.76" y1="102.20" x2="464.76" y2="116.40" stroke="#b0b0b0" stroke-width="0.9" />
<line x1="518.57" y1="102.20" x2="518.57" y2="116.40" stroke="#b0b0b0" stroke-width="0.9" />
<line x1="572.38" y1="102.20" x2="572.38" y2="116.40" stroke="#b0b0b0" stroke-width="0.9" />
<line x1="626.19" y1="102.20" x2="626.19" y2="116.40" stroke="#b0b0b0" stroke-width="0.9" />
<line x1="680.00" y1="102.20" x2="680.00" y2="116.40" stroke="#b0b0b0" stroke-width="0.9" />
<line x1="733.81" y1="102.20" x2="733.81" y2="116.40" stroke="#b0b0b0" stroke-width="0.9" />
<line x1="22.30" y1="102.20" x2="22.30" y2="450.20" stroke="#b0b0b0" stroke-width="0.9" />
<line x1="22.30" y1="116.40" x2="746.40" y2="116.40" stroke="#a8a8a8" stroke-width="0.9" />
<line x1="746.20" y1="116.40" x2="746.20" y2="450.20" stroke="#a8a8a8" stroke-width="0.9" />
<line x1="1.40" y1="137.00" x2="22.30" y2="137.00" stroke="#c4c4c4" stroke-width="0.8" />
<line x1="1.40" y1="152.38" x2="22.30" y2="152.38" stroke="#c4c4c4" stroke-width="0.8" />
<line x1="1.40" y1="167.75" x2="22.30" y2="167.75" stroke="#c4c4c4" stroke-width="0.8" />
<line x1="1.40" y1="183.13" x2="22.30" y2="183.13" stroke="#c4c4c4" stroke-width="0.8" />
<line x1="1.40" y1="198.50" x2="22.30" y2="198.50" stroke="#c4c4c4" stroke-width="0.8" />
<line x1="1.40" y1="213.88" x2="22.30" y2="213.88" stroke="#c4c4c4" stroke-width="0.8" />
<line x1="1.40" y1="229.26" x2="22.30" y2="229.26" stroke="#c4c4c4" stroke-width="0.8" />
<line x1="1.40" y1="244.63" x2="22.30" y2="244.63" stroke="#c4c4c4" stroke-width="0.8" />
<line x1="1.40" y1="260.01" x2="22.30" y2="260.01" stroke="#c4c4c4" stroke-width="0.8" />
<line x1="1.40" y1="275.38" x2="22.30" y2="275.38" stroke="#c4c4c4" stroke-width="0.8" />
<line x1="1.40" y1="290.76" x2="22.30" y2="290.76" stroke="#c4c4c4" stroke-width="0.8" />
<line x1="1.40" y1="306.14" x2="22.30" y2="306.14" stroke="#c4c4c4" stroke-width="0.8" />
<line x1="1.40" y1="321.51" x2="22.30" y2="321.51" stroke="#c4c4c4" stroke-width="0.8" />
<line x1="1.40" y1="336.89" x2="22.30" y2="336.89" stroke="#c4c4c4" stroke-width="0.8" />
<line x1="1.40" y1="352.26" x2="22.30" y2="352.26" stroke="#c4c4c4" stroke-width="0.8" />
<line x1="1.40" y1="367.64" x2="22.30" y2="367.64" stroke="#c4c4c4" stroke-width="0.8" />
<line x1="1.40" y1="383.02" x2="22.30" y2="383.02" stroke="#c4c4c4" stroke-width="0.8" />
<line x1="1.40" y1="398.39" x2="22.30" y2="398.39" stroke="#c4c4c4" stroke-width="0.8" />
<line x1="1.40" y1="413.77" x2="22.30" y2="413.77" stroke="#c4c4c4" stroke-width="0.8" />
<line x1="1.40" y1="429.14" x2="22.30" y2="429.14" stroke="#c4c4c4" stroke-width="0.8" />
<line x1="1.40" y1="444.52" x2="22.30" y2="444.52" stroke="#c4c4c4" stroke-width="0.8" />
<path d="M19.400 106v7h-7.600z" fill="#bdbdbd"/>
<g font-family="Liberation Sans, sans-serif">
<text transform="translate(82.10 113.90) scale(0.9 1)" font-size="10.9" fill="#217346" text-anchor="middle" font-weight="normal" stroke="#217346" stroke-width="0.2">A</text>
<text transform="translate(168.81 113.90) scale(0.9 1)" font-size="10.9" fill="#333" text-anchor="middle" font-weight="normal" stroke="#333" stroke-width="0.2">B</text>
<text transform="translate(222.62 113.90) scale(0.9 1)" font-size="10.9" fill="#333" text-anchor="middle" font-weight="normal" stroke="#333" stroke-width="0.2">C</text>
<text transform="translate(276.43 113.90) scale(0.9 1)" font-size="10.9" fill="#333" text-anchor="middle" font-weight="normal" stroke="#333" stroke-width="0.2">D</text>
<text transform="translate(330.24 113.90) scale(0.9 1)" font-size="10.9" fill="#333" text-anchor="middle" font-weight="normal" stroke="#333" stroke-width="0.2">E</text>
<text transform="translate(384.05 113.90) scale(0.9 1)" font-size="10.9" fill="#333" text-anchor="middle" font-weight="normal" stroke="#333" stroke-width="0.2">F</text>
<text transform="translate(437.86 113.90) scale(0.9 1)" font-size="10.9" fill="#333" text-anchor="middle" font-weight="normal" stroke="#333" stroke-width="0.2">G</text>
<text transform="translate(491.67 113.90) scale(0.9 1)" font-size="10.9" fill="#333" text-anchor="middle" font-weight="normal" stroke="#333" stroke-width="0.2">H</text>
<text transform="translate(545.48 113.90) scale(0.9 1)" font-size="10.9" fill="#333" text-anchor="middle" font-weight="normal" stroke="#333" stroke-width="0.2">I</text>
<text transform="translate(599.29 113.90) scale(0.9 1)" font-size="10.9" fill="#333" text-anchor="middle" font-weight="normal" stroke="#333" stroke-width="0.2">J</text>
<text transform="translate(653.10 113.90) scale(0.9 1)" font-size="10.9" fill="#333" text-anchor="middle" font-weight="normal" stroke="#333" stroke-width="0.2">K</text>
<text transform="translate(706.90 113.90) scale(0.9 1)" font-size="10.9" fill="#333" text-anchor="middle" font-weight="normal" stroke="#333" stroke-width="0.2">L</text>
<clipPath id="cr"><rect x="0" y="116.4" width="22.3" height="333.30"/></clipPath><g clip-path="url(#cr)">
<text x="12.40" y="132.40" font-size="10.8" fill="#333" text-anchor="middle" font-weight="normal" textLength="5.60" lengthAdjust="spacingAndGlyphs" stroke="#333" stroke-width="0.2">1</text>
<text x="12.40" y="148.98" font-size="10.8" fill="#333" text-anchor="middle" font-weight="normal" textLength="5.60" lengthAdjust="spacingAndGlyphs" stroke="#333" stroke-width="0.2">2</text>
<text x="12.40" y="164.35" font-size="10.8" fill="#333" text-anchor="middle" font-weight="normal" textLength="5.60" lengthAdjust="spacingAndGlyphs" stroke="#333" stroke-width="0.2">3</text>
<text x="12.40" y="179.73" font-size="10.8" fill="#333" text-anchor="middle" font-weight="normal" textLength="5.60" lengthAdjust="spacingAndGlyphs" stroke="#333" stroke-width="0.2">4</text>
<text x="12.40" y="195.10" font-size="10.8" fill="#333" text-anchor="middle" font-weight="normal" textLength="5.60" lengthAdjust="spacingAndGlyphs" stroke="#333" stroke-width="0.2">5</text>
<text x="12.40" y="210.48" font-size="10.8" fill="#333" text-anchor="middle" font-weight="normal" textLength="5.60" lengthAdjust="spacingAndGlyphs" stroke="#333" stroke-width="0.2">6</text>
<text x="12.40" y="225.86" font-size="10.8" fill="#333" text-anchor="middle" font-weight="normal" textLength="5.60" lengthAdjust="spacingAndGlyphs" stroke="#333" stroke-width="0.2">7</text>
<text x="12.40" y="241.23" font-size="10.8" fill="#333" text-anchor="middle" font-weight="normal" textLength="5.60" lengthAdjust="spacingAndGlyphs" stroke="#333" stroke-width="0.2">8</text>
<text x="12.40" y="256.61" font-size="10.8" fill="#333" text-anchor="middle" font-weight="normal" textLength="5.60" lengthAdjust="spacingAndGlyphs" stroke="#333" stroke-width="0.2">9</text>
<text x="12.40" y="271.98" font-size="10.8" fill="#217346" text-anchor="middle" font-weight="normal" textLength="11.40" lengthAdjust="spacingAndGlyphs" stroke="#217346" stroke-width="0.2">10</text>
<text x="12.40" y="287.36" font-size="10.8" fill="#333" text-anchor="middle" font-weight="normal" textLength="11.40" lengthAdjust="spacingAndGlyphs" stroke="#333" stroke-width="0.2">11</text>
<text x="12.40" y="302.74" font-size="10.8" fill="#333" text-anchor="middle" font-weight="normal" textLength="11.40" lengthAdjust="spacingAndGlyphs" stroke="#333" stroke-width="0.2">12</text>
<text x="12.40" y="318.11" font-size="10.8" fill="#333" text-anchor="middle" font-weight="normal" textLength="11.40" lengthAdjust="spacingAndGlyphs" stroke="#333" stroke-width="0.2">13</text>
<text x="12.40" y="333.49" font-size="10.8" fill="#333" text-anchor="middle" font-weight="normal" textLength="11.40" lengthAdjust="spacingAndGlyphs" stroke="#333" stroke-width="0.2">14</text>
<text x="12.40" y="348.86" font-size="10.8" fill="#333" text-anchor="middle" font-weight="normal" textLength="11.40" lengthAdjust="spacingAndGlyphs" stroke="#333" stroke-width="0.2">15</text>
<text x="12.40" y="364.24" font-size="10.8" fill="#333" text-anchor="middle" font-weight="normal" textLength="11.40" lengthAdjust="spacingAndGlyphs" stroke="#333" stroke-width="0.2">16</text>
<text x="12.40" y="379.62" font-size="10.8" fill="#333" text-anchor="middle" font-weight="normal" textLength="11.40" lengthAdjust="spacingAndGlyphs" stroke="#333" stroke-width="0.2">17</text>
<text x="12.40" y="394.99" font-size="10.8" fill="#333" text-anchor="middle" font-weight="normal" textLength="11.40" lengthAdjust="spacingAndGlyphs" stroke="#333" stroke-width="0.2">18</text>
<text x="12.40" y="410.37" font-size="10.8" fill="#333" text-anchor="middle" font-weight="normal" textLength="11.40" lengthAdjust="spacingAndGlyphs" stroke="#333" stroke-width="0.2">19</text>
<text x="12.40" y="425.74" font-size="10.8" fill="#333" text-anchor="middle" font-weight="normal" textLength="11.40" lengthAdjust="spacingAndGlyphs" stroke="#333" stroke-width="0.2">20</text>
<text x="12.40" y="441.12" font-size="10.8" fill="#333" text-anchor="middle" font-weight="normal" textLength="11.40" lengthAdjust="spacingAndGlyphs" stroke="#333" stroke-width="0.2">21</text>
<text x="12.40" y="456.50" font-size="10.8" fill="#333" text-anchor="middle" font-weight="normal" textLength="11.40" lengthAdjust="spacingAndGlyphs" stroke="#333" stroke-width="0.2">22</text>
</g></g>
<rect x="22.40" y="259.91" width="119.60" height="15.78" fill="none" stroke="#217346" stroke-width="1.700"/>
<rect x="139.20" y="272.68" width="5.20" height="5.20" fill="#217346" stroke="#fff" stroke-width="0.900"/>
<rect x="746.70" y="101.70" width="19.80" height="348.50" fill="#e6e6e6" />
<rect x="750.20" y="104.40" width="13.50" height="13.50" fill="#fff" stroke="#c0c0c0" stroke-width="0.800"/>
<path d="M753.600 113.200l3.400-3.800l3.400 3.800z" fill="#777"/>
<rect x="750.20" y="420.50" width="13.50" height="16.10" fill="#d9d9d9" />
<rect x="750.20" y="118.80" width="13.50" height="301.70" fill="#fff" stroke="#c0c0c0" stroke-width="0.800"/>
<rect x="750.20" y="436.60" width="13.50" height="13.40" fill="#fff" stroke="#c0c0c0" stroke-width="0.800"/>
<path d="M753.400 441.600l3.500 3.800l3.500-3.800z" fill="#777"/>
<rect x="1.40" y="450.20" width="765.10" height="27.10" fill="#e6e6e6" />
<line x1="1.40" y1="450.20" x2="766.50" y2="450.20" stroke="#a6a6a6" stroke-width="0.9" />
<path d="M30.900 459.600v6.800l-4-3.400z M54.600 459.600v6.800l4.200-3.400z" fill="#217346"/>
<g font-family="Liberation Sans, sans-serif">
<rect x="78.80" y="465.20" width="1.70" height="1.80" fill="#217346" />
<rect x="82.80" y="465.20" width="1.70" height="1.80" fill="#217346" />
<rect x="86.80" y="465.20" width="1.70" height="1.80" fill="#217346" />
<line x1="97.40" y1="454.00" x2="97.40" y2="472.60" stroke="#b4b4b4" stroke-width="0.9" />
<text x="114.30" y="467.30" font-size="11.6" fill="#555" text-anchor="start" font-weight="normal" textLength="161.50" lengthAdjust="spacingAndGlyphs" >UNI- &amp; BIVARIATE ANALYSES</text>
<rect x="294.30" y="449.60" width="94.30" height="22.60" fill="#fff" />
<rect x="294.30" y="471.90" width="94.30" height="2.00" fill="#217346" />
<line x1="294.10" y1="450.20" x2="294.10" y2="472.00" stroke="#b0b0b0" stroke-width="0.8" />
<line x1="388.80" y1="450.20" x2="388.80" y2="472.00" stroke="#b0b0b0" stroke-width="0.8" />
<text x="306.00" y="467.30" font-size="11.6" fill="#217346" text-anchor="start" font-weight="bold" textLength="70.90" lengthAdjust="spacingAndGlyphs" >Sample_Size</text>
<rect x="402.60" y="465.20" width="1.70" height="1.80" fill="#217346" />
<rect x="406.60" y="465.20" width="1.70" height="1.80" fill="#217346" />
<rect x="410.60" y="465.20" width="1.70" height="1.80" fill="#217346" />
</g>
<circle cx="433.400" cy="463.400" r="6.900" fill="none" stroke="#6e6e6e" stroke-width="1.200"/><path d="M429.600 463.400h7.600M433.400 459.600v7.600" stroke="#666" stroke-width="1.100" fill="none"/>
<rect x="460.40" y="458.80" width="1.40" height="1.40" fill="#b0b0b0" />
<rect x="460.40" y="462.70" width="1.40" height="1.40" fill="#b0b0b0" />
<rect x="460.40" y="466.60" width="1.40" height="1.40" fill="#b0b0b0" />
<rect x="476.80" y="456.80" width="14.20" height="14.10" fill="#fff" stroke="#c0c0c0" stroke-width="0.800"/>
<path d="M486 460.400v6.800l-3.800-3.400z" fill="#555"/>
<rect x="712.50" y="456.80" width="22.00" height="14.10" fill="#d9d9d9" />
<rect x="491.30" y="456.80" width="221.30" height="14.10" fill="#fff" stroke="#c0c0c0" stroke-width="0.800"/>
<rect x="734.70" y="456.80" width="14.00" height="14.10" fill="#fff" stroke="#c0c0c0" stroke-width="0.800"/>
<path d="M740 460.400v6.800l3.800-3.400z" fill="#555"/>
<rect x="1.40" y="477.30" width="765.10" height="20.80" fill="#f3f3f3" />
<g font-family="Liberation Sans, sans-serif">
<text x="8.20" y="490.80" font-size="10.3" fill="#444" text-anchor="start" font-weight="normal" textLength="29.30" lengthAdjust="spacingAndGlyphs" >Ready</text>
<text x="723.40" y="490.60" font-size="10.3" fill="#444" text-anchor="start" font-weight="normal" textLength="25.30" lengthAdjust="spacingAndGlyphs" >100%</text>
</g>
<!--MACRO-->
<rect x="59.500" y="484" width="9.300" height="8.600" fill="#fff" stroke="#666" stroke-width="0.900"/><rect x="59.500" y="483.600" width="9.300" height="2" fill="#666"/><circle cx="59.300" cy="483.800" r="2.400" fill="#555"/><path d="M59.500 488h9M59.500 490.300h9M62.500 486v6.600M65.600 486v6.600" stroke="#888" stroke-width="0.700"/>
<rect x="482.00" y="477.30" width="35.30" height="20.30" fill="#c8c8c8" />
<g fill="none" stroke="#555" stroke-width="0.900"><rect x="493.300" y="481.700" width="11.800" height="10.900"/><path d="M493.300 485.300h11.800M493.300 489h11.800M497.200 481.700v10.900M501.200 481.700v10.900"/><rect x="529.800" y="481.700" width="13" height="10.900"/><rect x="533" y="484.200" width="6.600" height="6.400"/><path d="M534.500 486.300h3.600M534.500 488.400h3.600"/><rect x="566" y="481.700" width="13.800" height="10.900"/><path d="M570.500 481.700v5.400h5v-5.400"/></g>
<line x1="595.50" y1="487.30" x2="602.00" y2="487.30" stroke="#444" stroke-width="1.5" />
<line x1="605.00" y1="487.30" x2="702.60" y2="487.30" stroke="#a0a0a0" stroke-width="0.9" />
<rect x="651.70" y="481.30" width="4.80" height="10.70" fill="#555" />
<line x1="704.60" y1="487.30" x2="711.80" y2="487.30" stroke="#444" stroke-width="1.4" />
<line x1="708.20" y1="483.70" x2="708.20" y2="490.90" stroke="#444" stroke-width="1.4" />
<rect x="0.00" y="0.00" width="1.40" height="499.00" fill="#217346" />
<rect x="766.50" y="0.00" width="1.50" height="499.00" fill="#217346" />
<rect x="0.00" y="497.60" width="768.00" height="1.40" fill="#217346" />
</svg></body></html>
